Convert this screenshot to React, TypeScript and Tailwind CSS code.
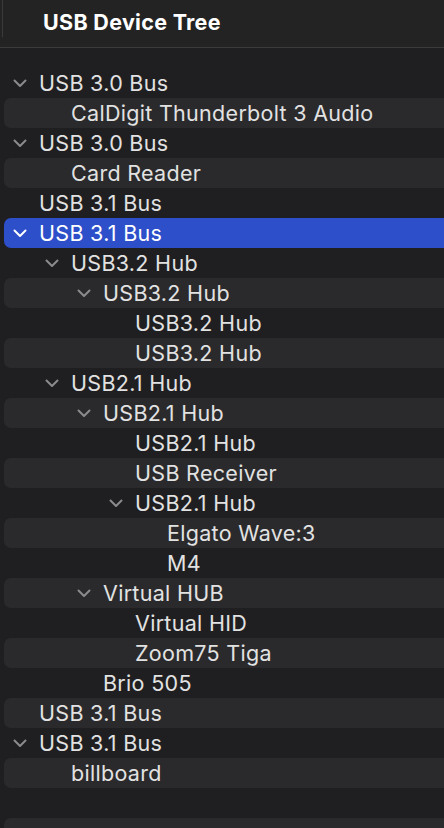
import React from "react"

type Row = { label: string; level: number; open?: boolean; selected?: boolean }

const rows: Row[] = [
  { label: "USB 3.0 Bus", level: 0, open: true },
  { label: "CalDigit Thunderbolt 3 Audio", level: 1 },
  { label: "USB 3.0 Bus", level: 0, open: true },
  { label: "Card Reader", level: 1 },
  { label: "USB 3.1 Bus", level: 0 },
  { label: "USB 3.1 Bus", level: 0, open: true, selected: true },
  { label: "USB3.2 Hub", level: 1, open: true },
  { label: "USB3.2 Hub", level: 2, open: true },
  { label: "USB3.2 Hub", level: 3 },
  { label: "USB3.2 Hub", level: 3 },
  { label: "USB2.1 Hub", level: 1, open: true },
  { label: "USB2.1 Hub", level: 2, open: true },
  { label: "USB2.1 Hub", level: 3 },
  { label: "USB Receiver", level: 3 },
  { label: "USB2.1 Hub", level: 3, open: true },
  { label: "Elgato Wave:3", level: 4 },
  { label: "M4", level: 4 },
  { label: "Virtual HUB", level: 2, open: true },
  { label: "Virtual HID", level: 3 },
  { label: "Zoom75 Tiga", level: 3 },
  { label: "Brio 505", level: 2 },
  { label: "USB 3.1 Bus", level: 0 },
  { label: "USB 3.1 Bus", level: 0, open: true },
  { label: "billboard", level: 1 },
  { label: "", level: 0 },
  { label: "", level: 0 },
]

const Chevron = ({ white }: { white?: boolean }) => (
  <svg width="14" height="9" viewBox="0 0 14 9" className="shrink-0">
    <polyline points="1.5,1.5 7,7 12.5,1.5" fill="none" stroke={white ? "#ffffff" : "#8b8b8d"} strokeWidth="2" strokeLinecap="round" strokeLinejoin="round" />
  </svg>
)

const TreeRow = ({ row, index }: { row: Row; index: number }) => {
  const striped = index % 2 === 1
  const bg = row.selected ? "bg-[#2d4fc9]" : striped ? "bg-[#2a2a2c]" : ""
  const pad = ["pl-[9px]", "pl-[41px]", "pl-[73px]", "pl-[105px]", "pl-[137px]"][row.level]
  return (
    <div className={`h-[30px] ml-[4px] rounded-l-[7px] flex items-center ${bg} ${pad}`}>
      <div className="w-[26px] flex items-center mt-[1px]">
        {row.open && <Chevron white={row.selected} />}
      </div>
      <span className={`text-[21.5px] tracking-[0.3px] leading-none mt-[2px] ${row.selected ? "text-white" : "text-[#e2e2e2]"}`}>{row.label}</span>
    </div>
  )
}

export default function App() {
  return (
    <div className="w-[444px] h-[828px] overflow-hidden bg-[#1f1f21]" style={{ fontFamily: "Inter, 'Noto Sans', sans-serif" }}>
      <div className="h-[48px] bg-[#232323] flex items-start border-b border-[#3b3b3b]">
        <div className="w-px h-[37px] ml-[2px] bg-[#3a3a3a]" />
        <div className="ml-[40px] mt-[12px] text-[21.5px] tracking-[0.3px] font-bold text-white leading-none">USB Device Tree</div>
      </div>
      <div className="pt-[20px]">
        {rows.map((r, i) => (
          <TreeRow key={i} row={r} index={i} />
        ))}
      </div>
    </div>
  )
}
